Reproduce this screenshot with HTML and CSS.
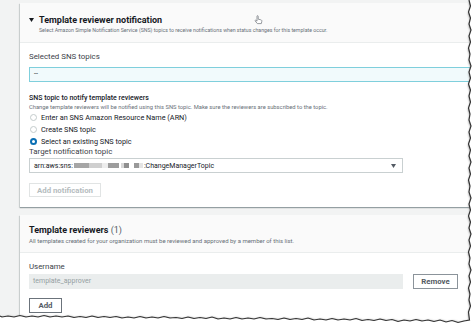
FILE: index.html
```html
<!DOCTYPE html>
<html>
<head>
<meta charset="utf-8">
<link rel="stylesheet" href="styles.css">
</head>
<body>
<div class="frame">
  <section class="card card-a">
    <header class="card-head">
      <h2 class="title"><svg class="caret" width="5" height="4" viewBox="0 0 5 4"><path d="M0 0H5L2.5 4Z" fill="#16191f"/></svg>Template reviewer notification</h2>
      <p class="sub sub-a">Select Amazon Simple Notification Service (SNS) topics to receive notifications when status changes for this template occur.</p>
    </header>
    <div class="card-body">
      <div class="label">Selected SNS topics</div>
      <div class="input focus">--</div>
      <div class="field-title">SNS topic to notify template reviewers</div>
      <div class="desc">Change template reviewers will be notified using this SNS topic. Make sure the reviewers are subscribed to the topic.</div>
      <div class="radios">
        <div class="radio"><span class="dot"></span>Enter an SNS Amazon Resource Name (ARN)</div>
        <div class="radio"><span class="dot"></span>Create SNS topic</div>
        <div class="radio"><span class="dot on"></span>Select an existing SNS topic</div>
      </div>
      <div class="label">Target notification topic</div>
      <div class="select">
        <span>arn:aws:sns:</span>
        <span class="blur"><i class="b1"></i><i class="b2"></i><i class="b3"></i><i class="b4"></i><i class="b5"></i><i class="b6"></i><i class="b7"></i><i class="b8"></i><i class="b9"></i><i class="b10"></i></span>
        <span>:ChangeManagerTopic</span>
        <svg class="arrow" width="5" height="4" viewBox="0 0 5 4"><path d="M0 0H5L2.5 4Z" fill="#545b64"/></svg>
      </div>
      <div class="btn disabled btn-notify">Add notification</div>
    </div>
  </section>
  <section class="card card-b">
    <header class="card-head head-b">
      <h2 class="title">Template reviewers&nbsp;<span class="count">(1)</span></h2>
      <p class="sub sub-b">All templates created for your organization must be reviewed and approved by a member of this list.</p>
    </header>
    <div class="card-body body-b">
      <div class="label">Username</div>
      <div class="row">
        <div class="input readonly">template_approver</div>
        <div class="btn btn-remove">Remove</div>
      </div>
      <div class="btn btn-add">Add</div>
    </div>
  </section>
  <svg class="cursor" width="9" height="10" viewBox="0 0 9 10"><path d="M3 1.2C3 0.5 4.2 0.5 4.2 1.2V4.2L6.8 4.8C7.6 5 8 5.6 7.8 6.4L7.3 8.6H3.4L1.2 6C0.8 5.4 1.6 4.8 2.1 5.3L3 6.2Z" fill="#fff" stroke="#7b8086" stroke-width="0.8"/></svg>
</div>
<svg class="torn" width="474" height="331" viewBox="0 0 474 331">
  <defs>
    <filter id="sh" x="-5%" y="-5%" width="110%" height="110%"><feGaussianBlur stdDeviation="0.9"/></filter>
  </defs>
  <path d="M469 0L470.5 6L468.5 12L470.5 18L469 24L471 30L469 36L470.5 42L468.5 48L470 54L469 60L471 66L469 72L470.5 78L468.5 84L470.5 90L469 96L470.5 102L468.5 108L470 114L469 120L471 126L469 132L470.5 138L468.5 144L470.5 150L469 156L471 162L469 168L470.5 174L468.5 180L470 186L469 192L471 198L469 204L470.5 210L468.5 216L470.5 222L469 228L471 234L469 240L470.5 246L468.5 252L470 258L469 264L471 270L469 276L470.5 282L468.5 288L470 294L469 300L470.5 306L468.5 312L469.5 320L464 321L458 322.5L452 320.5L446 322L440 320L434 321.5L428 320L422 321L416 319.5L410 321L404 320L398 321.5L392 319.5L386 320.5L380 319L374 320.5L368 319.5L362 320.5L356 318.5L350 320L344 319L338 320L332 318.5L326 320L320 319L314 320L308 318L302 319.5L296 318.5L290 319.5L284 318L278 319.5L272 318.5L266 319L260 317.5L254 319L248 318L242 319L236 317.5L230 319L224 318L218 319L212 317L206 318.5L200 317.5L194 318.5L188 317L182 318.5L176 317.5L170 318L164 316.5L158 318L152 317L146 318L140 316.5L134 318L128 317L122 318L116 316.5L110 317.5L104 316.5L98 317.5L92 316L86 317.5L80 316.5L74 317.5L68 316L62 317L56 316L50 317L44 315.5L38 317L32 316L26 317L20 315.5L14 317L8 316L2 317L0 316" fill="none" stroke="#8a8a8a" stroke-width="2.5" filter="url(#sh)" transform="translate(1,1.5)"/>
  <path d="M469 0L470.5 6L468.5 12L470.5 18L469 24L471 30L469 36L470.5 42L468.5 48L470 54L469 60L471 66L469 72L470.5 78L468.5 84L470.5 90L469 96L470.5 102L468.5 108L470 114L469 120L471 126L469 132L470.5 138L468.5 144L470.5 150L469 156L471 162L469 168L470.5 174L468.5 180L470 186L469 192L471 198L469 204L470.5 210L468.5 216L470.5 222L469 228L471 234L469 240L470.5 246L468.5 252L470 258L469 264L471 270L469 276L470.5 282L468.5 288L470 294L469 300L470.5 306L468.5 312L469.5 320L464 321L458 322.5L452 320.5L446 322L440 320L434 321.5L428 320L422 321L416 319.5L410 321L404 320L398 321.5L392 319.5L386 320.5L380 319L374 320.5L368 319.5L362 320.5L356 318.5L350 320L344 319L338 320L332 318.5L326 320L320 319L314 320L308 318L302 319.5L296 318.5L290 319.5L284 318L278 319.5L272 318.5L266 319L260 317.5L254 319L248 318L242 319L236 317.5L230 319L224 318L218 319L212 317L206 318.5L200 317.5L194 318.5L188 317L182 318.5L176 317.5L170 318L164 316.5L158 318L152 317L146 318L140 316.5L134 318L128 317L122 318L116 316.5L110 317.5L104 316.5L98 317.5L92 316L86 317.5L80 316.5L74 317.5L68 316L62 317L56 316L50 317L44 315.5L38 317L32 316L26 317L20 315.5L14 317L8 316L2 317L0 316L0 331L474 331L474 0Z" fill="#fff"/>
  <path d="M469 0L470.5 6L468.5 12L470.5 18L469 24L471 30L469 36L470.5 42L468.5 48L470 54L469 60L471 66L469 72L470.5 78L468.5 84L470.5 90L469 96L470.5 102L468.5 108L470 114L469 120L471 126L469 132L470.5 138L468.5 144L470.5 150L469 156L471 162L469 168L470.5 174L468.5 180L470 186L469 192L471 198L469 204L470.5 210L468.5 216L470.5 222L469 228L471 234L469 240L470.5 246L468.5 252L470 258L469 264L471 270L469 276L470.5 282L468.5 288L470 294L469 300L470.5 306L468.5 312L469.5 320L464 321L458 322.5L452 320.5L446 322L440 320L434 321.5L428 320L422 321L416 319.5L410 321L404 320L398 321.5L392 319.5L386 320.5L380 319L374 320.5L368 319.5L362 320.5L356 318.5L350 320L344 319L338 320L332 318.5L326 320L320 319L314 320L308 318L302 319.5L296 318.5L290 319.5L284 318L278 319.5L272 318.5L266 319L260 317.5L254 319L248 318L242 319L236 317.5L230 319L224 318L218 319L212 317L206 318.5L200 317.5L194 318.5L188 317L182 318.5L176 317.5L170 318L164 316.5L158 318L152 317L146 318L140 316.5L134 318L128 317L122 318L116 316.5L110 317.5L104 316.5L98 317.5L92 316L86 317.5L80 316.5L74 317.5L68 316L62 317L56 316L50 317L44 315.5L38 317L32 316L26 317L20 315.5L14 317L8 316L2 317L0 316" fill="none" stroke="#333" stroke-width="1.2"/>
</svg>
</body>
</html>
```

FILE: styles.css
```css
html, body {
  margin: 0;
  padding: 0;
}
body {
  background: #fff;
  font-family: Roboto, "Liberation Sans", sans-serif;
  color: #16191f;
  position: relative;
  width: 474px;
  height: 331px;
  overflow: hidden;
}
.frame {
  width: 474px;
  height: 331px;
  box-sizing: border-box;
  background: #f2f3f3;
  padding: 3px 0 0 20px;
  display: flex;
  flex-direction: column;
  gap: 8px;
  position: relative;
}
.card {
  background: #fff;
  flex: none;
  box-shadow: 0 1px 1px rgba(0, 28, 36, 0.3), -1px 1px 1px rgba(0, 28, 36, 0.12);
}
.card-head {
  background: #fafafa;
  border-bottom: 1px solid #eaeded;
  padding: 11px 9px 8px;
}
.title {
  margin: 0;
  font-size: 9px;
  line-height: 12px;
  font-weight: 700;
  display: flex;
  align-items: center;
  white-space: nowrap;
}
.caret {
  margin-right: 5px;
}
.sub {
  margin: 0;
  color: #687078;
  line-height: 8px;
  white-space: nowrap;
}
.sub-a {
  font-size: 5.22px;
  padding-left: 10px;
}
.card-body {
  padding: 9px 9px 10px;
}
.label {
  font-size: 7.9px;
  line-height: 10px;
  color: #3b4148;
  white-space: nowrap;
}
.input {
  height: 15px;
  box-sizing: border-box;
  font-size: 7px;
  line-height: 13px;
  padding-left: 4px;
  white-space: nowrap;
}
.focus {
  margin-top: 5px;
  margin-right: -20px;
  background: #f1fafc;
  border: 1px solid #7fcfdc;
  color: #16191f;
}
.field-title {
  margin-top: 11px;
  font-size: 7px;
  line-height: 10px;
  font-weight: 500;
  white-space: nowrap;
}
.desc {
  font-size: 5.8px;
  line-height: 8px;
  color: #687078;
  white-space: nowrap;
}
.radios {
  display: flex;
  flex-direction: column;
}
.radio {
  height: 12px;
  display: flex;
  align-items: center;
  font-size: 7.3px;
  white-space: nowrap;
  padding-left: 1px;
}
.dot {
  width: 5px;
  height: 5px;
  border-radius: 50%;
  border: 1px solid #c3cbcc;
  background: #fff;
  margin-right: 4px;
  flex: none;
}
.dot.on {
  border: 2px solid #0a6fb4;
  width: 3px;
  height: 3px;
}
.select {
  margin-top: 1px;
  width: 374px;
  height: 15px;
  box-sizing: border-box;
  border: 1px solid #c9d0d1;
  display: flex;
  align-items: center;
  padding-left: 4px;
  font-size: 7px;
  white-space: nowrap;
  position: relative;
}
.blur {
  display: flex;
  height: 5px;
  margin: 0 1px;
}
.blur i {
  display: block;
  height: 5px;
}
.b1 { width: 15px; background: #a6a6a6; }
.b2 { width: 13px; background: #cfcfcf; }
.b3 { width: 6px; background: #ededed; }
.b4 { width: 11px; background: #9d9d9d; }
.b5 { width: 2px; background: #fff; }
.b6 { width: 3px; background: #d8d8d8; }
.b7 { width: 5px; background: #8f8f8f; }
.b8 { width: 5px; background: #fff; }
.b9 { width: 5px; background: #999; }
.b10 { width: 4px; background: #e4e4e4; }
.arrow {
  margin-left: auto;
  margin-right: 6px;
}
.btn {
  box-sizing: border-box;
  height: 15px;
  border: 1px solid #545b64;
  font-size: 7.8px;
  font-weight: 700;
  color: #545b64;
  display: flex;
  align-items: center;
  justify-content: center;
  white-space: nowrap;
  flex: none;
}
.btn-notify {
  margin-top: 10px;
  width: 72px;
  height: 14px;
  border-color: #e1e4e4;
  color: #b5bcbe;
}
.head-b {
  padding: 9px 9px 7px;
}
.head-b .title {
  line-height: 13px;
}
.count {
  font-weight: 400;
  color: #545b64;
}
.sub-b {
  font-size: 6px;
}
.row {
  margin-top: 2px;
  display: flex;
  gap: 10px;
}
.readonly {
  width: 374px;
  background: #eaeded;
  color: #95a0a2;
  line-height: 15px;
}
.btn-remove {
  width: 45px;
  border-color: #8b939a;
}
.btn-add {
  margin-top: 9px;
  width: 33px;
  border-color: #6b737b;
}
.cursor {
  position: absolute;
  left: 254px;
  top: 15px;
}
.torn {
  position: absolute;
  left: 0;
  top: 0;
}
```
